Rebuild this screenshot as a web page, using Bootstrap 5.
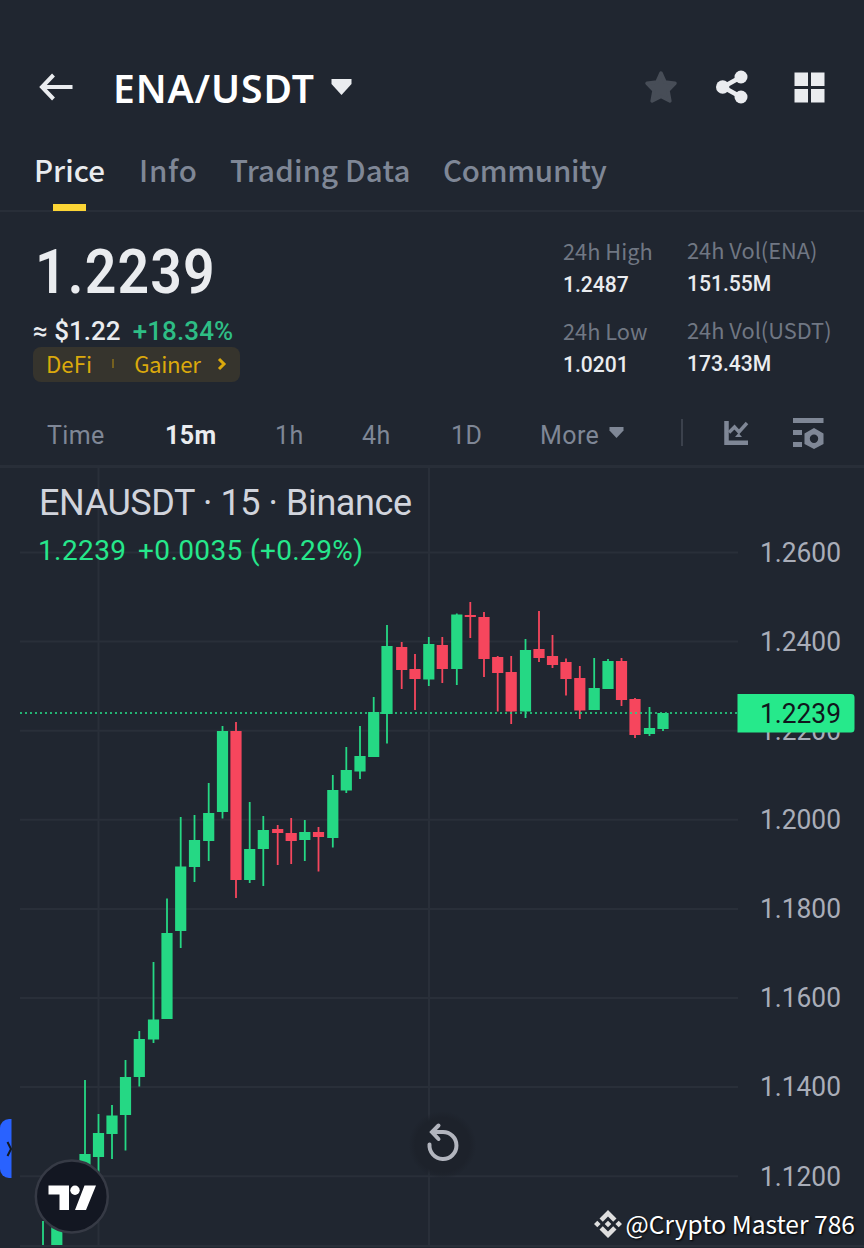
<!DOCTYPE html>
<html lang="en" data-bs-theme="dark">
<head>
<meta charset="utf-8">
<meta name="viewport" content="width=device-width, initial-scale=1">
<title>ENA/USDT</title>
<link href="https://cdn.jsdelivr.net/npm/bootstrap@5.3.0/dist/css/bootstrap.min.css" rel="stylesheet">
<style>
  :root { --bg:#202630; --line:#282e38; --muted:#7f8796; --bright:#eaecef; --up:#25d884; --down:#f6465d; }
  body { background:var(--bg); color:var(--bright); font-family:"Noto Sans CJK SC","Noto Sans",sans-serif; width:864px; height:1248px; overflow:hidden; line-height:1; }
  svg { display:block; flex:none; }
  .numeric { font-family:Roboto,sans-serif; transform-origin:0 50%; transform:scaleX(.93); }
  .topbar { height:139px; padding:35px 39px 0 39px; }
  .pair { font-family:"Noto Sans",sans-serif; font-size:39px; font-weight:600; color:#fff; width:216px; margin-left:40px; padding-top:2px; line-height:50px; letter-spacing:.9px; white-space:nowrap; }
  .tabs { height:73px; padding-left:34px; border-bottom:2px solid var(--line); }
  .tabs a { position:relative; color:var(--muted); text-decoration:none; font-size:29.5px; font-weight:500; line-height:61px; height:71px; white-space:nowrap; }
  .tabs a.active { color:var(--bright); }
  .tabs a.active::after { content:""; position:absolute; left:19px; bottom:-1px; width:33px; height:7px; background:#fcd535; }
  .summary { height:188px; padding-left:33px; }
  .last { font-size:61.5px; font-weight:600; line-height:60px; letter-spacing:1.3px; margin-top:30px; margin-left:2px; transform:scaleX(.9); }
  .approx { font-family:Roboto,sans-serif; font-size:26px; font-weight:500; line-height:30px; margin-top:14px; white-space:nowrap; }
  .gain { color:#2ebd85; margin-left:12px; letter-spacing:.1px; }
  .tagpill { background:#36342d; color:#dba90c; width:207px; height:35px; border-radius:8px; font-size:22.3px; padding:0 0 2px 13px; margin-top:1px; }
  .stats { padding-top:24px; }
  .stats dt { color:#707783; font-weight:400; font-size:21.8px; line-height:28px; white-space:nowrap; }
  .stats dd { font-size:22.7px; font-weight:500; line-height:30px; margin:5px 0 17px; }
  .frames { height:68px; border-bottom:3px solid var(--line); color:var(--muted); font-size:25px; font-family:Roboto,sans-serif; padding-left:47px; }
  .frames > * { flex:none; white-space:nowrap; }
  .frames .frame { padding-top:5px; letter-spacing:.4px; }
  .chartarea text { font-family:Roboto,sans-serif; }
  .watermark { position:absolute; right:9px; bottom:10px; color:#fff; font-size:24.6px; line-height:28px; text-shadow:1px 1px 2px #000; white-space:nowrap; }
  .watermark span { margin-top:-3px; }
</style>
</head>
<body class="position-relative">
<header class="topbar d-flex align-items-center">
  <svg width="34" height="28" viewBox="0 0 34 28" fill="none" stroke="#eaecef" stroke-width="4"><path d="M14.5 2 3 14l11.500 12M3 14H33.500"/></svg>
  <div class="pair">ENA/USDT</div>
  <svg style="margin-left:2px" width="21" height="17" viewBox="0 0 21 17"><path fill="#eaecef" d="M.5 0h20v5L10.500 16 .5 5z"/></svg>
  <svg class="ms-auto" width="34" height="34" viewBox="0 0 34 34"><path d="m17 3 4 9 10 1.300-7 7.200 1.900 10.500L17 26.500 8.100 31 10 20.500 3 13.300 13 12z" fill="#474d57" stroke="#474d57" stroke-width="3.500" stroke-linejoin="round"/></svg>
  <svg style="margin-left:38px" width="32" height="34" viewBox="0 0 32 34" fill="#eaecef" stroke="#eaecef"><path d="M7 17 25 7M7 17l18 10" stroke-width="4.600"/><g stroke="none"><circle cx="6.700" cy="17" r="6.700"/><circle cx="25" cy="7" r="6.500"/><circle cx="25" cy="27" r="6.500"/></g></svg>
  <svg style="margin-left:46px" width="31" height="31" viewBox="0 0 31 31" fill="#eaecef"><path d="M.5.5h13.500v13.500H.5zM17 .5h13.500v13.500H17zM.5 17h13.500v13.500H.5zM17 17h13.500v13.500H17z"/></svg>
</header>
<nav class="tabs d-flex">
  <a class="active" href="#" style="width:105px">Price</a><a href="#" style="width:91px;letter-spacing:.8px">Info</a><a href="#" style="width:213px;letter-spacing:.15px">Trading Data</a><a href="#" style="letter-spacing:-.25px">Community</a>
</nav>
<section class="summary d-flex">
  <div style="width:530px">
    <div class="numeric last">1.2239</div>
    <div class="approx"><span>≈ $1.22</span><span class="gain">+18.34%</span></div>
    <div class="tagpill d-flex align-items-center"><span>DeFi</span><span style="margin:0 20px 0 20px;width:2px;height:9px;background:#75601f"></span><span style="width:65px;letter-spacing:-.4px">Gainer</span><svg style="margin-left:18px" width="10" height="14" viewBox="0 0 10 14"><path d="m2 2 5 5-5 5" fill="none" stroke="#dba90c" stroke-width="3"/></svg></div>
  </div>
  <dl class="stats mb-0" style="width:124px;padding-top:25px"><dt>24h High</dt><dd class="numeric">1.2487</dd><dt>24h Low</dt><dd class="numeric">1.0201</dd></dl>
  <dl class="stats mb-0"><dt>24h Vol(ENA)</dt><dd class="numeric">151.55M</dd><dt>24h Vol(USDT)</dt><dd class="numeric">173.43M</dd></dl>
</section>
<div class="frames d-flex align-items-center">
  <span class="frame" style="width:118px">Time</span><b class="frame" style="width:110px;color:#eaecef">15m</b><span class="frame" style="width:87px">1h</span><span class="frame" style="width:89px">4h</span><span class="frame" style="width:89px">1D</span><span class="frame" style="width:61px">More</span>
  <svg style="margin-left:8px" width="15" height="12" viewBox="0 0 15 12"><path fill="#7f8796" d="M.5 0h14v3.500L7.500 11 .5 3.500z"/></svg>
  <span style="margin-left:57px;width:2px;height:27px;background:#3b414c"></span>
  <svg style="margin-left:41px" width="25" height="26" viewBox="0 0 25 26" fill="none" stroke="#7f8796"><path d="M2.500 1v21.700H24" stroke-width="4.500"/><path d="M5 12.500 10.500 7l4.500 5L23 3" stroke-width="3.400"/><path d="M11 17l3.500-4 3.500 4z" fill="#7f8796" stroke="none"/></svg>
  <svg style="margin:2px 0 0 44px" width="31" height="32" viewBox="0 0 31 32" fill="#7f8796"><path d="M0 0h30.500v5H0zM0 12h9v5H0zM0 24h9v5H0z"/><path fill-rule="evenodd" d="m21 10 9.500 5.500v10.500L21 31l-9.500-5V15.500zM21 16.500a4.200 4.200 0 1 0 0 8.400 4.200 4.200 0 0 0 0-8.400z"/></svg>
</div>
<svg class="chartarea" width="864" height="780" viewBox="0 468 864 780">
  <g id="grid" stroke="#292f39" stroke-width="2"></g>
  <g id="axis" fill="#a9adb8" font-size="27"></g>
  <text x="39" y="515" font-size="36" fill="#d1d4dc" textLength="373" lengthAdjust="spacing">ENAUSDT · 15 · Binance</text>
  <g fill="#26e78b" font-size="28"><text x="38" y="560" textLength="88">1.2239</text><text x="138" y="560" textLength="225">+0.0035 (+0.29%)</text></g>
  <g id="candles"></g>
  <path d="M20 713H738" stroke="#25d884" stroke-width="2" stroke-dasharray="2 3" opacity=".8"/>
  <path d="M737.500 694H851a3.500 3.500 0 0 1 3.500 3.500v31.500a3.500 3.500 0 0 1-3.500 3.500H737.500z" fill="#26e98b"/>
  <text x="760" y="722.500" font-size="27" fill="#10161c" textLength="81" lengthAdjust="spacingAndGlyphs">1.2239</text>
  <defs><radialGradient id="halo"><stop offset=".8" stop-color="#1d222b"/><stop offset="1" stop-color="#1d222b" stop-opacity="0"/></radialGradient></defs>
  <circle cx="442.500" cy="1145" r="34" fill="url(#halo)"/>
  <path d="M429.500 1144.500a13.500 13.500 0 1 0 13-12.500h-10M438.500 1125.500l-6.500 6.500 6.500 7" fill="none" stroke="#b2b5be" stroke-width="4" stroke-linecap="round"/>
  <path d="M11.500 1119H9a9 9 0 0 0-9 9v41a9 9 0 0 0 9 9h2.500z" fill="#2962ff"/>
  <path d="M7.500 1142l3.500 7-3.500 7" fill="none" stroke="#141820" stroke-width="2"/>
  <circle cx="71.800" cy="1196.500" r="36" fill="#131722" stroke="#363a45" stroke-width="2.500"/>
  <path d="M48.500 1185.500H69v24.500H59.500v-15.500h-11zM84.500 1185.500H96l-10 24.500H75z" fill="#fff"/><circle cx="75" cy="1190.300" r="4.700" fill="#fff"/>
</svg>
<div class="watermark d-flex align-items-center">
  <svg class="me-1" width="28" height="28" viewBox="0 0 28 28" fill="#dedede"><path d="m14 0 8.500 8.500-3.300 3.300L14 6.600l-5.200 5.200-3.300-3.300zM14 28l8.500-8.500-3.300-3.300-5.200 5.200-5.200-5.200-3.300 3.300zM14 10.700l3.300 3.300-3.300 3.300-3.300-3.300zM3.300 10.700 6.600 14l-3.300 3.300L0 14zM24.700 10.700 28 14l-3.300 3.300-3.300-3.300z"/></svg><span>@Crypto Master 786</span>
</div>
<script src="https://cdn.jsdelivr.net/npm/bootstrap@5.3.0/dist/js/bootstrap.bundle.min.js"></script>
<script>
const prices = ['1.2600','1.2400','1.2200','1.2000','1.1800','1.1600','1.1400','1.1200'];
let lines = '<path d="M98.500 468V1246M429 468V1246M20 1246H864"/>', labels = '';
prices.forEach((p, i) => {
  const y = 552.5 + i * 89.1;
  lines += `<path d="M20 ${y}H738"/>`;
  labels += `<text x="760" y="${y + 9.3}" textLength="81" lengthAdjust="spacingAndGlyphs">${p}</text>`;
});
grid.innerHTML = lines;
axis.innerHTML = labels;
// centre x, direction, wick top, body top, body bottom, wick bottom
const candleData = [
[43,1,1221,1250,1250,1245],[56.8,1,1180,1200,1245,1245],[70.5,1,1160,1170,1190,1200],[85,1,1080,1154,1174,1180],[98.5,1,1114,1133,1157,1174],[112,1,1105,1115.5,1134,1159],[125.5,1,1060,1077,1115,1150.5],[139.3,1,1031,1039,1077,1086.5],[153.5,1,962,1019.5,1039.5,1043],
[167,1,898.5,933,1019,1019],[180.7,1,817,866.5,931,948],[194.5,1,815,840,867,882],[208.7,1,783,813,841,861],[222.5,1,726,731,812,818.5],[236,0,722,731,880,898],[249.7,1,802,849,880,883],[263.3,1,816,830,849,886],[277.7,0,825,829,833,865],[291.2,0,818,833,841,864],[304.8,1,820,832,840,861],[318.5,0,827,832,837,871.5],
[332.8,1,775,790,838,847.5],[346.3,1,747,770,790.5,793],[360,1,726,756,771.5,779],[373.7,1,697,712,757,757],[387,1,625,646,714,743.5],[401.7,0,642,647,670,689],[415,0,654,669,679,710],[428.8,1,637,644,679.5,686],[442.3,0,637,645,669,683],[456.8,1,613.5,614.5,669,685],[470.3,0,602,615,617,638],[484,0,612,617,659,677],[497.7,0,656,657,673,711.5],[511.2,0,656,672,711.5,724],
[525.5,1,639,650,711.5,718],[539,0,611,649,658,662],[552.5,0,635,656,665,668],[566,0,658.5,662,679,695.5],[579.8,0,666,678,710.5,719],[594.2,1,658,688,710,710],[608,1,659,661,689,689],[621.5,0,658,661,700,706],[635,0,698,699,735,738],[649.5,1,707,728,734,736],[663,1,713,713,729,731]];
candles.innerHTML = candleData.map(([x, up, hi, a, b, lo]) => {
  const c = up ? '#25d884' : '#f6465d';
  return `<path d="M${x} ${hi}V${lo}" stroke="${c}" stroke-width="1.800"/>` + (b > a ? `<path d="M${x-5.6} ${a}h11.200v${b-a}h-11.200z" fill="${c}"/>` : '');
}).join('');
</script>
</body>
</html>
